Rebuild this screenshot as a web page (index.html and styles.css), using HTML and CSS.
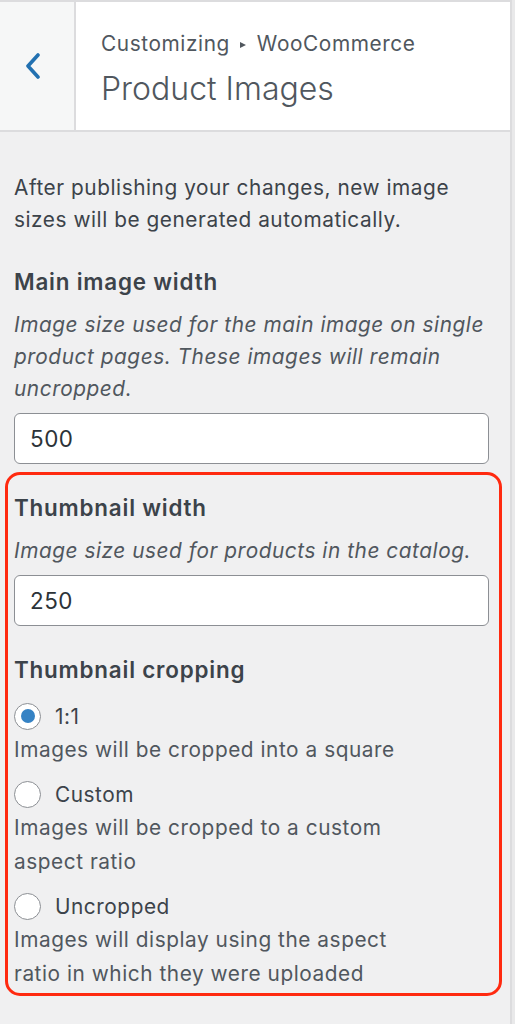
FILE: index.html
```html
<!DOCTYPE html>
<html lang="en">
<head>
<meta charset="utf-8">
<title>Product Images</title>
<link rel="stylesheet" href="styles.css">
</head>
<body>
<div class="panel">
  <header class="head">
    <button class="back" type="button" aria-label="Back">
      <svg width="16" height="26" viewBox="0 0 16 26"><polyline points="13,2 3,13 13,24" fill="none" stroke="#2271b1" stroke-width="3.6" stroke-linecap="round" stroke-linejoin="round"/></svg>
    </button>
    <div class="titles">
      <div class="action">Customizing <svg class="tri" width="8" height="8" viewBox="0 0 8 8"><polygon points="1,1 7,4 1,7" fill="#50575e"/></svg> WooCommerce</div>
      <h2 class="ptitle">Product Images</h2>
    </div>
  </header>
  <main class="content">
    <p class="intro">After publishing your changes, new image sizes will be generated automatically.</p>

    <section class="control">
      <h3 class="ctitle">Main image width</h3>
      <p class="desc">Image size used for the main image on single product pages. These images will remain uncropped.</p>
      <div class="field">500</div>
    </section>

    <div class="highlight">
      <section class="control">
        <h3 class="ctitle">Thumbnail width</h3>
        <p class="desc">Image size used for products in the catalog.</p>
        <div class="field">250</div>
      </section>

      <section class="control crop">
        <h3 class="ctitle">Thumbnail cropping</h3>
        <div class="option">
          <div class="row"><span class="radio checked"></span><span class="label">1:1</span></div>
          <p class="odesc">Images will be cropped into a square</p>
        </div>
        <div class="option">
          <div class="row"><span class="radio"></span><span class="label">Custom</span></div>
          <p class="odesc">Images will be cropped to a custom<br>aspect ratio</p>
        </div>
        <div class="option">
          <div class="row"><span class="radio"></span><span class="label">Uncropped</span></div>
          <p class="odesc">Images will display using the aspect<br>ratio in which they were uploaded</p>
        </div>
      </section>
    </div>
  </main>
</div>
</body>
</html>
```

FILE: styles.css
```css
* { box-sizing: border-box; }
html, body { margin: 0; padding: 0; }
body {
  background: #e9e9ea;
  font-family: Inter, "Noto Sans", "Liberation Sans", sans-serif;
  color: #3c434a;
  letter-spacing: 0.55px;
}
.panel {
  width: 512px;
  min-height: 1024px;
  background: #f0f0f1;
  border-top: 2px solid #dcdcde;
  border-right: 2px solid #dcdcde;
}
.head {
  display: flex;
  height: 130px;
  background: #fff;
  border-bottom: 2px solid #dcdcde;
}
.back {
  width: 76px;
  flex: none;
  background: #f6f7f7;
  border: 0;
  border-right: 2px solid #dcdcde;
  display: flex;
  align-items: center;
  justify-content: center;
  padding: 0 8px 0 0;
  margin: 0;
}
.titles {
  padding: 29px 0 0 25px;
}
.action {
  font-size: 20.8px;
  line-height: 26px;
  color: #50575e;
  letter-spacing: 0.6px;
}
.tri { vertical-align: 2px; margin: 0 3px; }
.ptitle {
  margin: 12px 0 0;
  font-size: 32px;
  line-height: 40px;
  font-weight: 300;
  color: #50575e;
  letter-spacing: 0;
}
.content {
  padding: 40px 21px 0 14px;
}
.intro {
  margin: 0;
  font-size: 20.8px;
  line-height: 32px;
  color: #3c434a;
}
.control { margin-top: 30px; }
.ctitle {
  margin: 0;
  font-size: 22.4px;
  line-height: 32px;
  font-weight: 600;
  color: #3c434a;
  letter-spacing: 0.8px;
}
.desc {
  margin: 11px 0 0;
  font-size: 20.8px;
  line-height: 32px;
  font-style: italic;
  color: #50575e;
}
.field {
  margin-top: 8px;
  height: 51px;
  background: #fff;
  border: 1.5px solid #8c8f94;
  border-radius: 6px;
  padding: 0 15px;
  display: flex;
  align-items: center;
  font-size: 22.4px;
  color: #2c3338;
}
.highlight {
  margin: 8px -13px 0 -9px;
  border: 3px solid #ff2a10;
  border-radius: 15px;
  padding: 17px 10px 2px 6px;
}
.highlight .control:first-child { margin-top: 0; }
.crop { margin-top: 28px; }
.option { margin-top: 11px; }
.crop .ctitle + .option { margin-top: 14px; }
.row {
  display: flex;
  align-items: center;
  height: 32px;
  gap: 14px;
}
.radio {
  width: 27px;
  height: 27px;
  border-radius: 50%;
  border: 1.5px solid #8c8f94;
  background: #fff;
  display: flex;
  align-items: center;
  justify-content: center;
  flex: none;
}
.radio.checked::after {
  content: "";
  width: 14px;
  height: 14px;
  border-radius: 50%;
  background: #3582c4;
}
.label {
  font-size: 20.8px;
  color: #3c434a;
}
.odesc {
  margin: 1px 0 0;
  font-size: 20.8px;
  line-height: 34px;
  color: #50575e;
}
```
